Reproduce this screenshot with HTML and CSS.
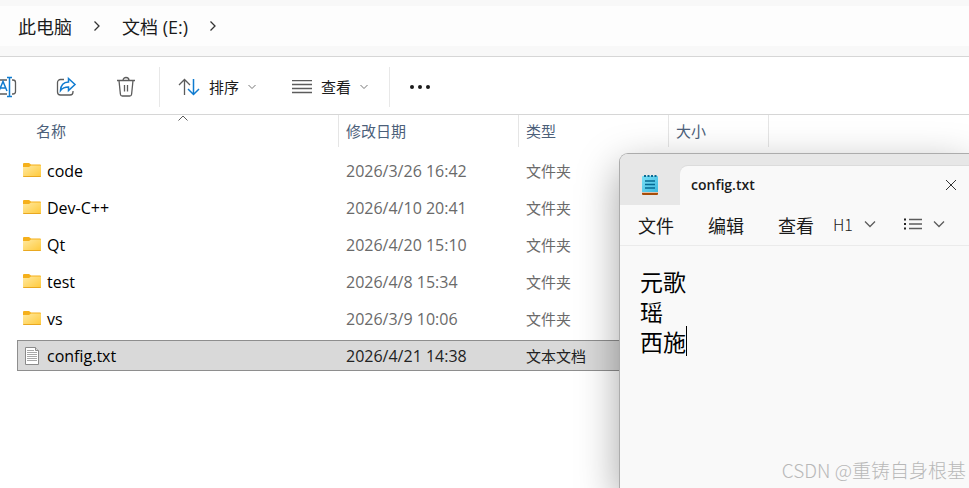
FILE: index.html
```html
<!DOCTYPE html>
<html lang="zh-CN">
<head>
  <meta charset="UTF-8" />
  <meta name="viewport" content="width=device-width, initial-scale=1.0"/>
  <title>文档 (E:)</title>
  <link rel="stylesheet" href="styles.css">
</head>
<body>

  <main class="explorer">
    <nav class="address">
      <div class="crumbs">
        <a href="#">此电脑</a>
        <svg class="arrow" width="8" height="12" viewBox="0 0 8 12"><path d="M1.500 1.500 6 6l-4.500 4.500"/></svg>
        <a href="#">文档 (E:)</a>
        <svg class="arrow" width="8" height="12" viewBox="0 0 8 12"><path d="M1.500 1.500 6 6l-4.500 4.500"/></svg>
      </div>
    </nav>

    <div class="toolbar">
      <div class="group icons">
        <button aria-label="Rename">
          <svg width="22" height="22" viewBox="0 0 22 22">
            <path d="M12 4H4a3 3 0 0 0-3 3v8a3 3 0 0 0 3 3h8M17 4h1a2.500 2.500 0 0 1 2.500 2.500v9a2.500 2.500 0 0 1-2.500 2.500h-1"/>
            <path class="blue" d="M14.500 1.500v19M12 1.500h5M12 20.500h5M4 15l4-9.500L12 15M5.500 12h5"/>
          </svg>
        </button>
        <button aria-label="Share">
          <svg width="22" height="22" viewBox="0 0 22 22">
            <path d="M9 3.500H5.500a3 3 0 0 0-3 3v9.500a3 3 0 0 0 3 3H15a3 3 0 0 0 3-3v-1"/>
            <path class="blue" d="M13.500 2.500 20 8.500l-6.500 6v-3.500c-4 0-6 .8-8 3.500.3-5.500 3.500-8.300 8-8.500z"/>
          </svg>
        </button>
        <button aria-label="Delete">
          <svg width="22" height="22" viewBox="0 0 22 22">
            <path d="M2 4.500h18M8 4.500c0-4 6-4 6 0M4 4.500l1.400 13.700c.1 1 .9 1.800 1.900 1.800h7.400c1 0 1.800-.8 1.900-1.800L18 4.500M9.500 9v6.500M12.500 9v6.500"/>
          </svg>
        </button>
      </div>
      <div class="group menus">
        <button>
          <svg width="22" height="18" viewBox="0 0 22 18">
            <path d="M6.500 17V1.500M1 7l5.500-5.500L12 7"/>
            <path class="blue" d="M15.500 1v15.500M10 11l5.500 5.500L21 11"/>
          </svg>
          <span>排序</span>
          <svg class="chev" width="8" height="6" viewBox="0 0 8 6"><path d="m.5 1 3.500 3.500L7.500 1"/></svg>
        </button>
        <button>
          <svg width="20" height="14" viewBox="0 0 20 14"><path d="M0 .5h20M0 4.500h20M0 8.500h20M0 12.500h20"/></svg>
          <span>查看</span>
          <svg class="chev" width="8" height="6" viewBox="0 0 8 6"><path d="m.5 1 3.500 3.500L7.500 1"/></svg>
        </button>
      </div>
      <div class="group">
        <button aria-label="More">
          <svg class="dots" width="20" height="4" viewBox="0 0 20 4"><circle cx="2" cy="2" r="2"/><circle cx="10" cy="2" r="2"/><circle cx="18" cy="2" r="2"/></svg>
        </button>
      </div>
    </div>

    <svg width="0" height="0" class="defs">
      <defs>
        <linearGradient id="folderFill" x1="0" y1="0" x2="1" y2="1">
          <stop offset="0" stop-color="#ffe9a0"/>
          <stop offset="1" stop-color="#ffc93a"/>
        </linearGradient>
        <symbol id="folder" viewBox="0 0 18 15">
          <path fill="#f5b01b" d="M0 1A1 1 0 0 1 1 0H6l2 1.500h9A1 1 0 0 1 18 2.500V13H0z"/>
          <path fill="url(#folderFill)" d="M0 4h6l2-1.500h10V13a1 1 0 0 1-1 1H1a1 1 0 0 1-1-1z"/>
          <path fill="#e9a820" d="M0 13h18a1 1 0 0 1-1 1H1a1 1 0 0 1-1-1z"/>
        </symbol>
      </defs>
    </svg>

    <table class="files">
      <thead>
        <tr>
          <th class="name"><div>名称<svg class="sort" width="10" height="6" viewBox="0 0 10 6"><path d="m.5 5.500 4.500-4.500 4.500 4.500"/></svg></div></th>
          <th class="date"><div>修改日期</div></th>
          <th class="type"><div>类型</div></th>
          <th class="size"><div>大小</div></th>
        </tr>
      </thead>
      <tbody>
        <tr>
          <td><div class="file"><svg class="folder" width="18" height="15"><use href="#folder"/></svg>code</div></td>
          <td class="when">2026/3/26 16:42</td><td>文件夹</td><td></td>
        </tr>
        <tr>
          <td><div class="file"><svg class="folder" width="18" height="15"><use href="#folder"/></svg>Dev-C++</div></td>
          <td class="when">2026/4/10 20:41</td><td>文件夹</td><td></td>
        </tr>
        <tr>
          <td><div class="file"><svg class="folder" width="18" height="15"><use href="#folder"/></svg>Qt</div></td>
          <td class="when">2026/4/20 15:10</td><td>文件夹</td><td></td>
        </tr>
        <tr>
          <td><div class="file"><svg class="folder" width="18" height="15"><use href="#folder"/></svg>test</div></td>
          <td class="when">2026/4/8 15:34</td><td>文件夹</td><td></td>
        </tr>
        <tr>
          <td><div class="file"><svg class="folder" width="18" height="15"><use href="#folder"/></svg>vs</div></td>
          <td class="when">2026/3/9 10:06</td><td>文件夹</td><td></td>
        </tr>
        <tr class="selected">
          <td>
            <div class="file">
              <svg width="18" height="18" viewBox="0 0 18 18">
                <path fill="#fff" stroke="#8a8a8a" stroke-width="1" d="M2.500.5h10l3 3v14h-13z"/>
                <path fill="#ddd" stroke="#8a8a8a" stroke-width="1" d="M12.500.5v3h3"/>
                <path stroke="#a8a8a8" stroke-width="1" d="M4 3.500h7M4 5.500h10M4 7.500h10M4 9.500h10M4 11.500h10M4 13.500h10"/>
              </svg>config.txt
            </div>
          </td>
          <td class="when">2026/4/21 14:38</td><td>文本文档</td><td></td>
        </tr>
      </tbody>
    </table>
  </main>

  <section class="notepad">
    <div class="titlebar">
      <div class="app">
        <svg width="16" height="20" viewBox="0 0 16 20">
          <defs>
            <linearGradient id="padFill" x1="0" y1="0" x2="1" y2="1">
              <stop offset="0" stop-color="#7be0f6"/>
              <stop offset="1" stop-color="#3db8df"/>
            </linearGradient>
          </defs>
          <path fill="#a84c08" d="M0 17h16v2a1 1 0 0 1-1 1H1a1 1 0 0 1-1-1z"/>
          <path fill="#f4f4f4" d="M0 16.500h16v1.200H0z"/>
          <path fill="url(#padFill)" d="M1 1h14a1 1 0 0 1 1 1v15H0V2a1 1 0 0 1 1-1z"/>
          <path stroke="#0b6a92" stroke-width="2" d="M3 0v2M6.500 0v2M10 0v2M13.500 0v2"/>
          <path stroke="#066a93" stroke-width="1.500" d="M3 6h10M3 9.500h10M3 13h10"/>
        </svg>
      </div>
      <div class="tab">
        <span>config.txt</span>
        <button aria-label="Close">
          <svg width="12" height="12" viewBox="0 0 12 12"><path d="m1 1 10 10M11 1 1 11"/></svg>
        </button>
      </div>
    </div>
    <div class="menubar">
      <button>文件</button>
      <button>编辑</button>
      <button>查看</button>
      <button class="tool">H1<svg width="12" height="8" viewBox="0 0 12 8"><path d="m1 1.500 5 5 5-5"/></svg></button>
      <button class="tool list" aria-label="List">
        <svg width="18" height="12" viewBox="0 0 18 12"><path d="M5 1.500h13M5 6h13M5 10.500h13"/><path class="bullets" d="M0 1.500h2M0 6h2M0 10.500h2"/></svg>
        <svg width="12" height="8" viewBox="0 0 12 8"><path d="m1 1.500 5 5 5-5"/></svg>
      </button>
    </div>
    <div class="editor">
      <textarea aria-label="config.txt" spellcheck="false">元歌
瑶
西施</textarea>
      <span class="caret"></span>
    </div>
    <div class="watermark">CSDN @重铸自身根基</div>
  </section>

</body>
</html>
```
FILE: styles.css
```css
* {
  box-sizing: border-box;
}

body {
  margin: 0;
  min-height: 100vh;
  position: relative;
  overflow: hidden;
  background: #fff;
  color: #1b1b1b;
  font-family: "Open Sans", "Noto Sans CJK SC", sans-serif;
  font-size: 15px;
}

button {
  display: flex;
  align-items: center;
  padding: 0;
  border: none;
  background: none;
  color: inherit;
  font: inherit;
  cursor: pointer;
}

svg {
  flex: none;
  fill: none;
  stroke: #5c5c5c;
  stroke-width: 1.3;
}

/* address bar */
.address {
  padding: 6px 0 10px;
  background: #f8f8f8;
  border-bottom: 1px solid #d6d6d6;
}
.crumbs {
  display: flex;
  align-items: center;
  gap: 21px;
  height: 40px;
  padding-left: 18px;
  background: #fdfdfd;
  font-size: 18px;
}
.crumbs a {
  color: #1b1b1b;
  text-decoration: none;
}
.crumbs .arrow {
  stroke: #333;
}

/* command bar */
.toolbar {
  display: flex;
  align-items: center;
  height: 58px;
  padding-top: 2px;
  border-bottom: 1px solid #d6d6d6;
}
.group {
  display: flex;
  align-items: center;
  height: 40px;
  padding-left: 20px;
}
.group + .group {
  border-left: 1px solid #e8e8e8;
}
.icons {
  gap: 38px;
  padding: 0 22px 0 0;
  margin-left: -5px;
}
.menus {
  gap: 36px;
  padding: 0 21px 0 18px;
}
.menus button {
  gap: 9px;
}
.toolbar .blue {
  stroke: #0f7bd0;
  stroke-width: 1.5;
}
.toolbar .chev {
  stroke: #777;
  stroke-width: 1;
}
.toolbar .dots {
  fill: #1b1b1b;
  stroke: none;
}

/* file list */
.defs {
  position: absolute;
}
.files {
  margin-left: 17px;
  table-layout: fixed;
  width: 752px;
  border-spacing: 0;
  color: #6a6a6a;
}
.files th {
  height: 37px;
  padding: 0;
  vertical-align: top;
  text-align: left;
  font-weight: normal;
  color: #4c607a;
}
.files th div {
  display: flex;
  align-items: center;
  height: 32px;
  padding: 0 0 2px 7px;
  border-right: 1px solid #e5e5e5;
}
.files .name {
  width: 322px;
}
.files .date {
  width: 180px;
}
.files .type {
  width: 150px;
}
.files .name div {
  padding-left: 19px;
  position: relative;
}
.sort {
  position: absolute;
  top: 0;
  left: 50%;
  stroke-width: 1;
}
.files td {
  height: 37px;
  padding: 0 7px;
  border: solid transparent;
  border-width: 3px 0;
  background-clip: padding-box;
}
.files .when {
  font-size: 16px;
}
.file {
  display: flex;
  align-items: center;
  gap: 6px;
  color: #000;
  font-size: 16px;
}
.folder {
  stroke: none;
}
.files td:first-child {
  padding-left: 6px;
}
.selected td {
  background-color: #d9d9d9;
  box-shadow: inset 0 1px #8e8e8e, inset 0 -1px #8e8e8e;
  color: #222;
}
.selected td:first-child {
  box-shadow: inset 0 1px #8e8e8e, inset 0 -1px #8e8e8e, inset 1px 0 #8e8e8e;
}

/* notepad window on top */
.notepad {
  position: absolute;
  top: 153px;
  left: 619px;
  right: 0;
  bottom: 0;
  display: flex;
  flex-direction: column;
  border: solid #acacac;
  border-width: 1px 0 0 1px;
  border-radius: 9px 0 0 0;
  background: #f9f9f9;
  box-shadow: 0 14px 42px rgba(0, 0, 0, 0.36);
}
.titlebar {
  display: flex;
  height: 51px;
  padding-top: 12px;
  border-radius: 8px 0 0 0;
  background: #e7e7e7;
}
.app {
  display: flex;
  align-items: center;
  width: 60px;
  padding: 0 0 2px 22px;
  border-bottom-right-radius: 6px;
}
.app svg {
  stroke: none;
}
.tab {
  flex: 1;
  display: flex;
  align-items: center;
  justify-content: space-between;
  padding: 0 12px 2px 11px;
  border-radius: 8px 0 0 0;
  background: #f9f9f9;
  box-shadow: 0 -1px #dcdcdc;
  font-size: 14px;
  font-weight: 600;
}
.tab svg {
  stroke: #333;
  stroke-width: 1;
}
.menubar {
  display: flex;
  align-items: center;
  height: 41px;
  padding-left: 18px;
  border-bottom: 1px solid #ebebeb;
  font-size: 18px;
  white-space: nowrap;
}
.menubar button {
  flex: none;
  margin-right: 34px;
}
.menubar .tool {
  gap: 11px;
  margin: 0 28px 3px -15px;
  font-family: "Noto Sans CJK SC", sans-serif;
  font-size: 16px;
  font-weight: 300;
}
.menubar .list {
  margin-left: 0;
}
.bullets {
  stroke: #222;
  stroke-width: 2;
}
.editor {
  flex: 1;
  position: relative;
}
.editor textarea {
  display: block;
  width: 100%;
  height: 100%;
  padding: 20px;
  border: none;
  outline: none;
  resize: none;
  background: none;
  color: #000;
  font: 23px/30px "Noto Sans CJK SC", sans-serif;
}
.caret {
  position: absolute;
  top: 80px;
  left: 66px;
  width: 1px;
  height: 30px;
  background: #000;
}
.watermark {
  position: absolute;
  right: 3px;
  bottom: 5px;
  color: #b8b8b8;
  font-family: "Noto Sans CJK SC", sans-serif;
  font-size: 19px;
  font-weight: 300;
}
```
